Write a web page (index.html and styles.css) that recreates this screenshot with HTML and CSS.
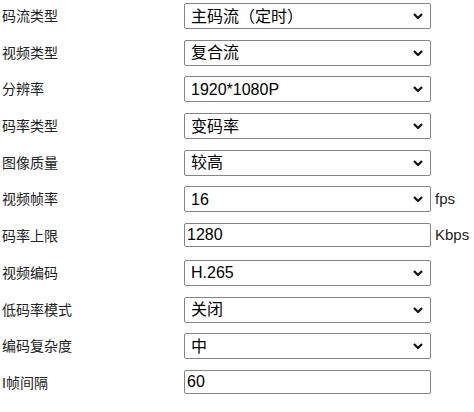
FILE: index.html
```html
<!DOCTYPE html>
<html lang="zh-CN">
<head>
    <meta charset="UTF-8">
    <meta name="viewport" content="width=device-width, initial-scale=1.0">
    <title>视频参数</title>
    <link rel="stylesheet" href="styles.css">
</head>
<body>
    <div class="form">
        <div class="row">
            <label class="row__label">码流类型</label>
            <div class="select__wrap">
                <select class="field select">
                    <option>主码流（定时）</option>
                </select>
                <svg class="arrow" viewBox="0 0 10 6"><path d="M1 1 L5 5 L9 1"/></svg>
            </div>
        </div>
        <div class="row">
            <label class="row__label">视频类型</label>
            <div class="select__wrap">
                <select class="field select">
                    <option>复合流</option>
                </select>
                <svg class="arrow" viewBox="0 0 10 6"><path d="M1 1 L5 5 L9 1"/></svg>
            </div>
        </div>
        <div class="row">
            <label class="row__label">分辨率</label>
            <div class="select__wrap">
                <select class="field select">
                    <option>1920*1080P</option>
                </select>
                <svg class="arrow" viewBox="0 0 10 6"><path d="M1 1 L5 5 L9 1"/></svg>
            </div>
        </div>
        <div class="row">
            <label class="row__label">码率类型</label>
            <div class="select__wrap">
                <select class="field select">
                    <option>变码率</option>
                </select>
                <svg class="arrow" viewBox="0 0 10 6"><path d="M1 1 L5 5 L9 1"/></svg>
            </div>
        </div>
        <div class="row">
            <label class="row__label">图像质量</label>
            <div class="select__wrap">
                <select class="field select">
                    <option>较高</option>
                </select>
                <svg class="arrow" viewBox="0 0 10 6"><path d="M1 1 L5 5 L9 1"/></svg>
            </div>
        </div>
        <div class="row">
            <label class="row__label">视频帧率</label>
            <div class="select__wrap">
                <select class="field select">
                    <option>16</option>
                </select>
                <svg class="arrow" viewBox="0 0 10 6"><path d="M1 1 L5 5 L9 1"/></svg>
            </div>
            <span class="unit">fps</span>
        </div>
        <div class="row">
            <label class="row__label">码率上限</label>
            <input class="field input" type="text" value="1280">
            <span class="unit">Kbps</span>
        </div>
        <div class="row">
            <label class="row__label">视频编码</label>
            <div class="select__wrap">
                <select class="field select">
                    <option>H.265</option>
                </select>
                <svg class="arrow" viewBox="0 0 10 6"><path d="M1 1 L5 5 L9 1"/></svg>
            </div>
        </div>
        <div class="row">
            <label class="row__label">低码率模式</label>
            <div class="select__wrap">
                <select class="field select">
                    <option>关闭</option>
                </select>
                <svg class="arrow" viewBox="0 0 10 6"><path d="M1 1 L5 5 L9 1"/></svg>
            </div>
        </div>
        <div class="row">
            <label class="row__label">编码复杂度</label>
            <div class="select__wrap">
                <select class="field select">
                    <option>中</option>
                </select>
                <svg class="arrow" viewBox="0 0 10 6"><path d="M1 1 L5 5 L9 1"/></svg>
            </div>
        </div>
        <div class="row">
            <label class="row__label">I帧间隔</label>
            <input class="field input" type="text" value="60">
        </div>
    </div>
</body>
</html>
```

FILE: styles.css
```css
body {
    margin: 0;
    background-color: #fff;
    font-family: "Liberation Sans", "Noto Sans CJK SC", sans-serif;
    color: #000;
}
.form {
    padding-top: 3px;
}
.row {
    display: flex;
    align-items: flex-start;
    height: 36.7px;
}
.row__label {
    flex: 0 0 182px;
    padding-left: 2px;
    line-height: 26px;
    font-size: 14px;
    color: #222;
}
.select__wrap {
    position: relative;
    width: 247px;
}
.field {
    box-sizing: border-box;
    margin: 0;
    width: 247px;
    border: 1px solid #858585;
    border-radius: 2px;
    background-color: #fff;
    font-family: "Liberation Sans", "Noto Sans CJK SC", sans-serif;
    font-size: 16px;
    color: #000;
    outline: none;
}
.select {
    -webkit-appearance: none;
    appearance: none;
    height: 26px;
    padding: 0 24px 0 6px;
}
.input {
    height: 24px;
    padding: 0 2px;
}
.arrow {
    position: absolute;
    top: 10px;
    right: 8px;
    width: 10px;
    height: 6px;
    pointer-events: none;
}
.arrow path {
    fill: none;
    stroke: #111;
    stroke-width: 2.2;
}
.unit {
    margin-left: 4px;
    line-height: 26px;
    font-size: 15px;
    color: #222;
}
.row .input + .unit {
    line-height: 24px;
}
```
